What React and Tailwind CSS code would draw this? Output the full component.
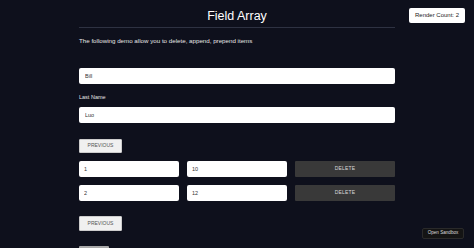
const App = () => {
  const rows = [
    ["1", "10"],
    ["2", "12"],
  ];
  return (
    <div className="relative min-h-[248px] h-[248px] overflow-hidden bg-[#0e101c] font-['Liberation_Sans',Arial,sans-serif]">
      <button className="absolute left-[409px] top-[8px] w-[56px] h-[15px] rounded-[2px] bg-white text-[6px] text-[#222]">
        Render Count: 2
      </button>

      <div className="mx-auto w-[316px]">
        <h1 className="pt-[8px] pb-[3px] border-b border-[#2e3242] text-center text-[12.5px] leading-[16px] text-white">
          Field Array
        </h1>
        <p className="mt-[9px] text-[6.2px] leading-[8px] text-[#e6e6e6]">
          The following demo allow you to delete, append, prepend items
        </p>

        <input
          className="mt-[23px] block w-full h-[16px] rounded-[2px] bg-white px-[6px] text-[5.5px] text-[#333] outline-none"
          defaultValue="Bill"
        />
        <label className="mt-[9px] block text-[5.5px] leading-[8px] text-[#e6e6e6]">Last Name</label>
        <input
          className="mt-[6px] block w-full h-[16px] rounded-[2px] bg-white px-[6px] text-[5.5px] text-[#333] outline-none"
          defaultValue="Luo"
        />

        <button className="mt-[16px] block w-[43px] h-[14px] rounded-[1px] border border-[#ccc] bg-[#f0f0f0] text-[5px] text-[#555]">
          PREVIOUS
        </button>

        <div className="mt-[8px] flex flex-col gap-[8px]">
          {rows.map(([a, b], i) => (
            <div key={i} className="grid grid-cols-3 gap-[8px] h-[16px]">
              <input
                className="h-full rounded-[2px] bg-white px-[5px] text-[5.5px] text-[#333] outline-none"
                defaultValue={a}
              />
              <input
                className="h-full rounded-[2px] bg-white px-[5px] text-[5.5px] text-[#333] outline-none"
                defaultValue={b}
              />
              <button className="h-full rounded-[1px] bg-[#393939] text-[5px] tracking-[0.2px] text-[#d8d8d8]">
                DELETE
              </button>
            </div>
          ))}
        </div>

        <button className="mt-[15px] block w-[43px] h-[15px] rounded-[1px] border border-[#ccc] bg-[#f0f0f0] text-[5px] text-[#555]">
          PREVIOUS
        </button>

        <div className="mt-[15px] w-[30px] h-[14px] rounded-[1px] bg-[#a9a9a9]" />
      </div>

      <button className="absolute left-[422px] top-[228px] w-[42px] h-[11px] rounded-[2px] border border-[#2a2a2a] bg-[#141414] text-[4.6px] text-[#ddd]">
        Open Sandbox
      </button>
    </div>
  );
};

export default App;
